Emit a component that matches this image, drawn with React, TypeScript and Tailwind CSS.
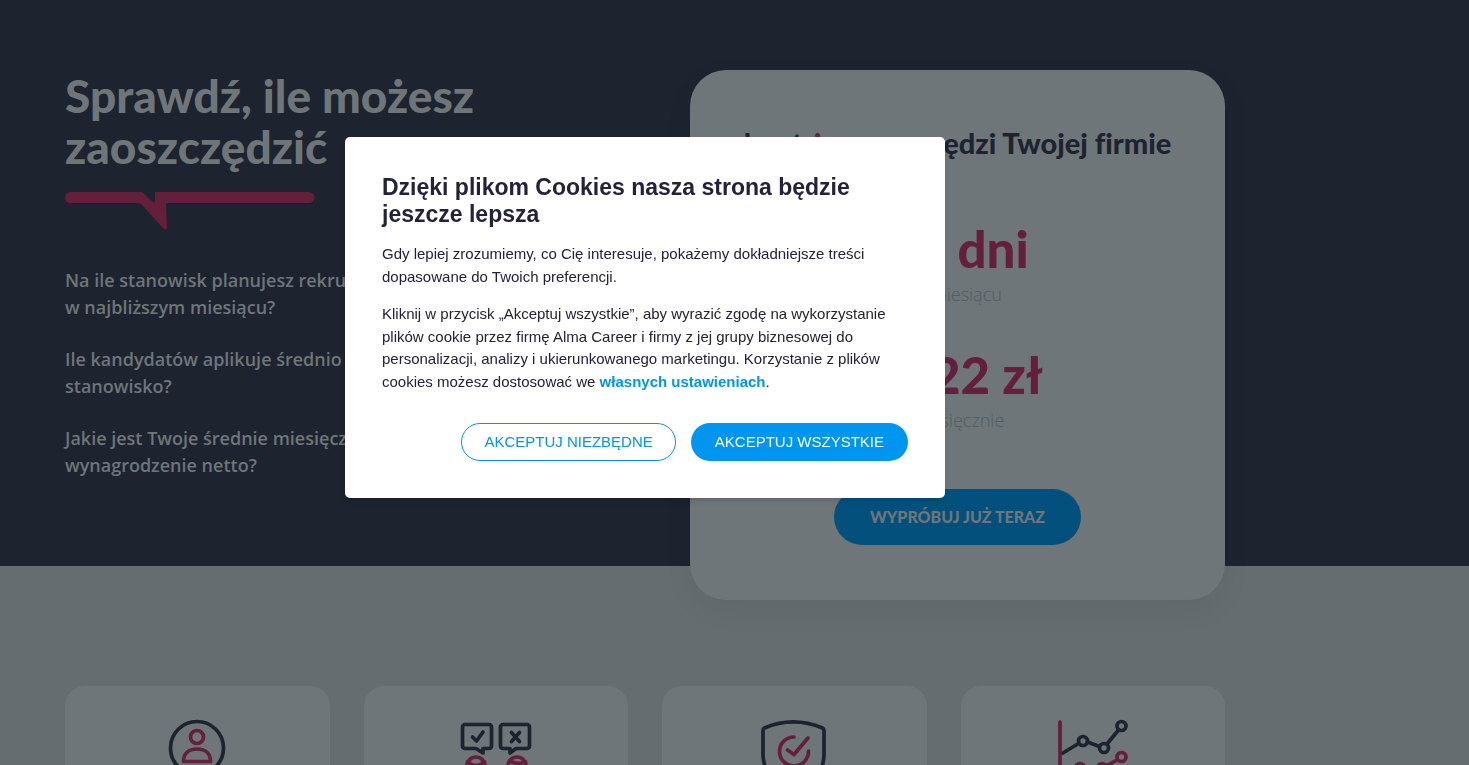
import type { ReactNode } from 'react';

const questions = [
  ['Na ile stanowisk planujesz rekrutację', 'w najbliższym miesiącu?'],
  ['Ile kandydatów aplikuje średnio na jedno', 'stanowisko?'],
  ['Jakie jest Twoje średnie miesięczne', 'wynagrodzenie netto?'],
];

function PersonIcon() {
  return (
    <svg width="80" height="80" viewBox="0 0 80 80" fill="none" strokeWidth="3.700">
      <circle cx="40" cy="32" r="26.500" stroke="#1d232f" />
      <g stroke="#641f3c" strokeLinejoin="round">
        <circle cx="40" cy="21" r="6.500" />
        <path d="M26.500 45.500 C26.500 37 32 33 40 33 C48 33 53.500 37 53.500 45.500 Z" />
      </g>
    </svg>
  );
}

function DialogIcon() {
  return (
    <svg width="80" height="80" viewBox="0 0 80 80" fill="none" strokeWidth="3.700" strokeLinejoin="round" strokeLinecap="round">
      <g stroke="#1d232f">
        <path d="M9 8.500 H33 A2.500 2.500 0 0 1 35.500 11 V30 A2.500 2.500 0 0 1 33 32.500 H27 V37 L20 32.500 H9 A2.500 2.500 0 0 1 6.500 30 V11 A2.500 2.500 0 0 1 9 8.500 Z" />
        <path d="M47 8.500 H71 A2.500 2.500 0 0 1 73.500 11 V30 A2.500 2.500 0 0 1 71 32.500 H60 L54 37 V32.500 H47 A2.500 2.500 0 0 1 44.500 30 V11 A2.500 2.500 0 0 1 47 8.500 Z" />
        <path d="M16.500 21 L20.500 25 L27 16" />
        <path d="M55.500 16.500 L63.500 25.500 M63.500 16.500 L55.500 25.500" />
      </g>
      <g stroke="#641f3c">
        <circle cx="20" cy="50" r="9" />
        <path d="M11.500 46 Q20 53 28.500 46" />
        <circle cx="61" cy="50" r="9" />
        <path d="M53.500 45 Q61 49 69.500 46" />
      </g>
    </svg>
  );
}

function ShieldIcon() {
  return (
    <svg width="80" height="80" viewBox="0 0 80 80" fill="none" strokeWidth="3.700" strokeLinejoin="round" strokeLinecap="round">
      <path
        d="M10.500 12 C29 4 49 4 68.500 12 Q70 12.800 70 14.500 V38 C70 58 56 70 40 76 C24 70 9 58 9 38 V14.500 Q9 12.800 10.500 12 Z"
        stroke="#1d232f"
      />
      <g stroke="#641f3c">
        <path d="M40 21 A14.500 14.500 0 1 0 54.500 35" />
        <path d="M33.500 34 L40 38.500 L54 22" />
      </g>
    </svg>
  );
}

function ChartIcon() {
  return (
    <svg width="80" height="80" viewBox="0 0 80 80" fill="none" strokeWidth="3.700" strokeLinecap="round">
      <g stroke="#641f3c">
        <path d="M7 6 V76 H72" />
        <path d="M32 54 L43 57 M53 50 L64 44" />
        <circle cx="27" cy="52" r="4.500" />
        <circle cx="49" cy="52" r="4.500" />
        <circle cx="68.500" cy="41" r="4.500" />
      </g>
      <g stroke="#1d232f">
        <path d="M10 37 L25.500 27.500 M34.500 26 L46.500 30.500 M54 28 L65.500 14" />
        <circle cx="30" cy="25" r="4.500" />
        <circle cx="51" cy="32" r="4.500" />
        <circle cx="68.500" cy="10" r="4.500" />
      </g>
    </svg>
  );
}

function Feature({ children }: { children: ReactNode }) {
  return (
    <li className="flex h-64 justify-center rounded-[20px] bg-[#6e7679] pt-[30px]">
      {children}
    </li>
  );
}

function Result({ value, label }: { value: string; label: string }) {
  return (
    <div className="flex flex-col items-center">
      <p className="font-[Lato] text-[51px] leading-[60px] font-black text-[#641f3c]">{value}</p>
      <p className="text-lg leading-[30px] font-light text-[#505e65]">{label}</p>
    </div>
  );
}

function CookieDialog() {
  return (
    <div className="fixed inset-0">
      <div className="flex max-w-[1290px] justify-center pt-[137px]">
        <div
          role="dialog"
          aria-labelledby="cookie-title"
          className="w-[600px] rounded-[5px] bg-white p-[37px] font-['Liberation_Sans',Arial,sans-serif] text-[#24213a] shadow-md"
        >
          <h2 id="cookie-title" className="text-[23px] leading-[27px] font-bold">
            Dzięki plikom Cookies nasza strona będzie jeszcze lepsza
          </h2>
          <div className="mt-[15px] space-y-[15px] text-[15px] leading-normal">
            <p>
              Gdy lepiej zrozumiemy, co Cię interesuje, pokażemy dokładniejsze treści dopasowane do
              Twoich preferencji.
            </p>
            <p>
              Kliknij w przycisk „Akceptuj wszystkie”, aby wyrazić zgodę na wykorzystanie plików
              cookie przez firmę Alma Career i firmy z jej grupy biznesowej do personalizacji,
              analizy i ukierunkowanego marketingu. Korzystanie z plików cookies możesz dostosować
              we{' '}
              <a href="#ustawienia" className="font-bold text-[#0095ee]">
                własnych ustawieniach
              </a>
              .
            </p>
          </div>
          <div className="mt-[30px] flex justify-end gap-[15px] text-[15px]">
            <button className="h-[38px] rounded-full border border-[#0095ee] px-[22px] text-[#0095ee]">
              AKCEPTUJ NIEZBĘDNE
            </button>
            <button className="h-[38px] rounded-full bg-[#0095ee] px-6 text-white">
              AKCEPTUJ WSZYSTKIE
            </button>
          </div>
        </div>
      </div>
    </div>
  );
}

export default function App() {
  return (
    <div className="h-screen overflow-hidden bg-[#656d70] font-['Open_Sans',sans-serif]">
      {/* Savings calculator */}
      <section className="bg-[#1d232f]">
        <div className="grid max-w-[1290px] grid-cols-[1fr_535px] items-start px-[65px] pt-[70px]">
          <div className="text-[#6e7679]">
            <h1 className="font-[Lato] text-[46px] leading-[51px] font-black">
              Sprawdź, ile możesz
              <br />
              zaoszczędzić
            </h1>
            <svg className="mt-5" width="250" height="38" viewBox="0 0 250 38" fill="#641f3c">
              <path d="M5.500 0 H77 L88.500 10.500 Q90 10 90 8 V0 H244 A5.500 5.500 0 0 1 244 11 H103 Q101 11 101 13 L102 36 Q101 38.500 99 37 L77 13 Q75 11 72 11 H5.500 A5.500 5.500 0 0 1 5.500 0 Z" />
            </svg>
            <div className="mt-[37px] space-y-[25px] text-lg leading-[27px] font-semibold">
              {questions.map(([first, second]) => (
                <p key={first}>
                  {first}
                  <br />
                  {second}
                </p>
              ))}
            </div>
          </div>

          <div className="-mb-[34px] flex flex-col items-center rounded-[36px] bg-[#6e7679] pt-[55px] pb-[55px] shadow-[0_10px_30px_rgba(0,0,0,0.05)]">
            <h2 className="font-[Lato] text-[29px] leading-9 font-black text-[#1d232f] [font-variant-ligatures:none]">
              kontr<span className="text-[#641f3c]">io</span> zaoszczędzi Twojej firmie
            </h2>
            <div className="mt-[58px] flex flex-col gap-9">
              <Result value="12 dni" label="w miesiącu" />
              <Result value="1022 zł" label="miesięcznie" />
            </div>
            <button className="mt-[54px] h-14 w-[247px] rounded-full bg-[#04507d] font-[Lato] text-base font-black text-[#6e7679]">
              WYPRÓBUJ JUŻ TERAZ
            </button>
          </div>
        </div>
      </section>

      {/* Features */}
      <section className="max-w-[1290px] px-[65px] pt-[120px]">
        <ul className="grid grid-cols-4 gap-[34px]">
          <Feature>
            <PersonIcon />
          </Feature>
          <Feature>
            <DialogIcon />
          </Feature>
          <Feature>
            <ShieldIcon />
          </Feature>
          <Feature>
            <ChartIcon />
          </Feature>
        </ul>
      </section>

      <CookieDialog />
    </div>
  );
}
